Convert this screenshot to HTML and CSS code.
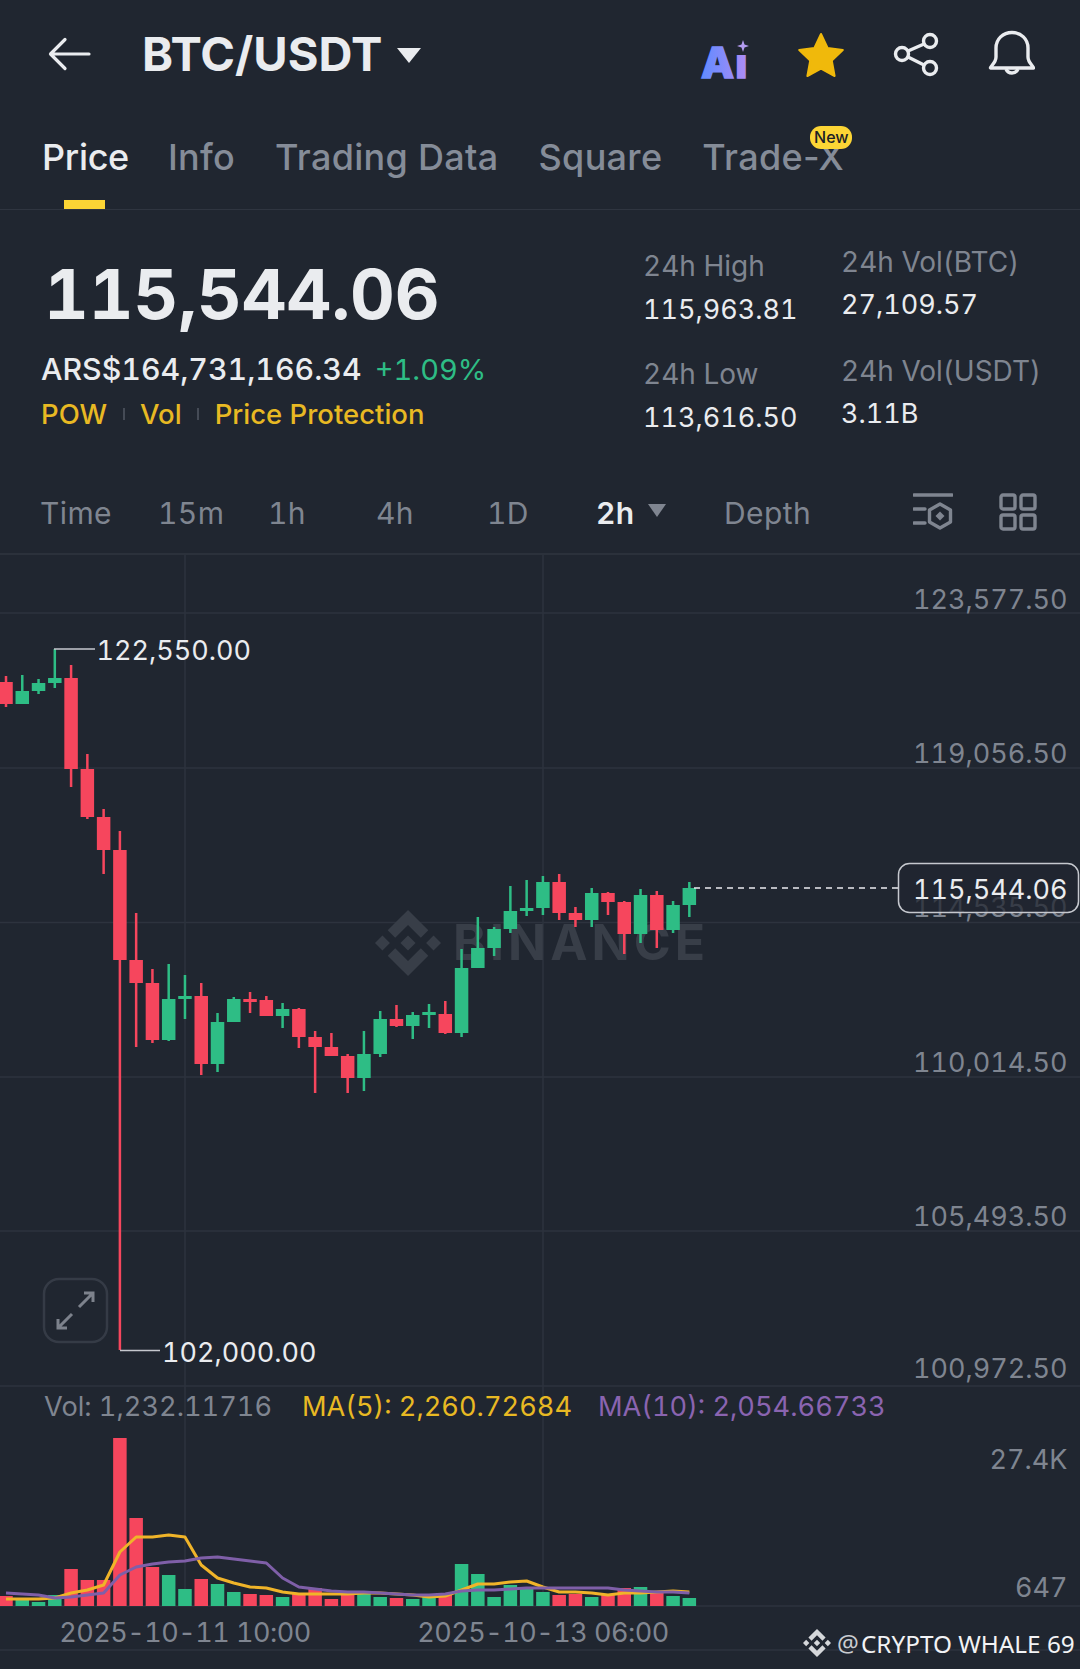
FILE: index.html

```html
<!DOCTYPE html>
<html lang="en">
<head>
  <meta charset="UTF-8" />
  <meta name="viewport" content="width=device-width, initial-scale=1.0" />
  <title>BTC/USDT</title>
  <link rel="stylesheet" href="styles.css">
</head>
<body>
  <header class="topbar">
    <svg class="back" width="44" height="36" viewBox="0 0 44 36"><path d="M41 18H3M17 3.500 2.500 18 17 32.500"/></svg>
    <h1>BTC/USDT</h1>
    <span class="caret"></span>
    <div class="top-icons">
      <svg class="ai" width="50" height="48" viewBox="0 0 50 48">
        <defs>
          <linearGradient id="aiGrad" x1="0" y1="0" x2="1" y2="0">
            <stop offset="0" stop-color="#5f8bff"/>
            <stop offset="1" stop-color="#b08cf5"/>
          </linearGradient>
        </defs>
        <text x="1" y="47.500" fill="url(#aiGrad)" stroke="url(#aiGrad)">Ai</text>
        <rect class="ai-mask" x="34" y="8" width="16" height="17"/>
        <path d="M43 10l1.500 4.500 4.500 1.500-4.500 1.500L43 22l-1.500-4.500-4.500-1.500 4.500-1.500z" fill="#b39cf0"/>
      </svg>
      <svg class="star" width="48" height="48" viewBox="0 0 48 48"><path d="M24 4l6.600 14 15.200 2-11 10.600 2.800 15.400L24 38.600 10.400 46l2.800-15.400-11-10.600 15.200-2z"/></svg>
      <svg class="line-icon" width="48" height="48" viewBox="0 0 48 48">
        <circle cx="10" cy="24" r="6.500"/><circle cx="38" cy="11" r="6.500"/><circle cx="38" cy="38" r="6.500"/>
        <path d="M16 21l16-7M16 27l16 8"/>
      </svg>
      <svg class="line-icon" width="48" height="48" viewBox="0 0 48 48">
        <path d="M3.500 38c-.5-1.500 5.500-5 5.500-11v-9C9 9 16 2.500 25 2.500S41 9 41 18v9c0 6 6 9.500 5.500 11z"/>
        <path d="M19 39a6.500 6.500 0 0 0 12 0"/>
      </svg>
    </div>
  </header>

  <nav class="tabs">
    <a class="tab active">Price</a>
    <a class="tab">Info</a>
    <a class="tab">Trading Data</a>
    <a class="tab">Square</a>
    <a class="tab">Trade-X<span class="badge">New</span></a>
  </nav>

  <section class="summary">
    <div class="quote">
      <div class="last-price">115,544.06</div>
      <div class="fiat">ARS$164,731,166.34 <span class="up">+1.09%</span></div>
      <div class="tags">
        <span>POW</span><i></i><span>Vol</span><i></i><span>Price Protection</span>
      </div>
    </div>
    <div class="stats stats-a">
      <div class="stat"><label>24h High</label><b>115,963.81</b></div>
      <div class="stat"><label>24h Low</label><b>113,616.50</b></div>
    </div>
    <div class="stats stats-b">
      <div class="stat"><label>24h Vol(BTC)</label><b>27,109.57</b></div>
      <div class="stat"><label>24h Vol(USDT)</label><b>3.11B</b></div>
    </div>
  </section>

  <div class="intervals">
    <span>Time</span>
    <span>15m</span>
    <span>1h</span>
    <span>4h</span>
    <span>1D</span>
    <span class="current">2h<em></em></span>
    <span>Depth</span>
    <svg class="tool" width="40" height="38" viewBox="0 0 40 38">
      <path d="M1 2h38M1 16h11M1 30h11"/>
      <path d="M27 11l10.500 6v12L27 35l-10.500-6V17z"/>
      <path class="dot" d="M27 18.500l4.500 4.500-4.500 4.500-4.500-4.500z"/>
    </svg>
    <svg class="tool" width="38" height="38" viewBox="0 0 38 38">
      <rect x="2" y="2" width="14" height="14" rx="2"/><rect x="22" y="2" width="14" height="14" rx="2"/>
      <rect x="2" y="22" width="14" height="14" rx="2"/><rect x="22" y="22" width="14" height="14" rx="2"/>
    </svg>
  </div>

  <svg id="chart" width="1080" height="1114" viewBox="0 555 1080 1114">
    <defs>
      <symbol id="bnb" viewBox="0 0 126.610 126.610">
        <path d="M38.730 53.200l24.590-24.580 24.600 24.600 14.300-14.310L63.320 0 24.420 38.900zM0 63.310L14.300 49l14.310 14.310-14.310 14.300zM38.730 73.410L63.320 98l24.600-24.600 14.310 14.290-38.900 38.920-38.910-38.880-.02-.02zM98 63.310L112.300 49l14.310 14.310-14.310 14.300zM77.830 63.300L63.320 48.780 48.810 63.280l14.510 14.500z"/>
      </symbol>
    </defs>

    <g class="grid">
      <path d="M0 613H1080M0 768H1080M0 922.500H1080M0 1077H1080M0 1231H1080M0 1386H1080M0 1606H1080M0 1650H1080"/>
      <path d="M185 555V1606M543 555V1606"/>
    </g>

    <use href="#bnb" class="mark" x="375" y="910" width="66" height="66"/>
    <text class="mark mark-text" x="453" y="960">BINANCE</text>

    <g class="axis">
      <text x="1067.500" y="609">123,577.50</text>
      <text x="1067.500" y="763">119,056.50</text>
      <text x="1067.500" y="917">114,535.50</text>
      <text x="1067.500" y="1072">110,014.50</text>
      <text x="1067.500" y="1226">105,493.50</text>
      <text x="1067.500" y="1378">100,972.50</text>
      <text x="1067.500" y="1469">27.4K</text>
      <text x="1067.500" y="1597">647</text>
    </g>

    <g id="candles"></g>
    <g id="volumes"></g>
    <polyline id="ma5" class="ma ma5"/>
    <polyline id="ma10" class="ma ma10"/>

    <path class="pointer" d="M54 649H95M120 1350.500H160"/>
    <text class="peak" x="96.500" y="660">122,550.00</text>
    <text class="peak" x="162" y="1362">102,000.00</text>

    <path class="last-line" d="M694 888H898"/>
    <rect class="last-box" x="898.500" y="863.500" width="180" height="49" rx="11"/>
    <text class="last-text" x="1067.500" y="899">115,544.06</text>

    <g class="expand">
      <rect x="44" y="1279" width="63" height="63" rx="15"/>
      <path d="M79 1307l14-14M84 1293h9v9M72 1314l-14 14M58 1319v9h9"/>
    </g>

    <text class="legend" x="44" y="1416">Vol: 1,232.11716</text>
    <text class="legend l-ma5" x="302" y="1416">MA(5): 2,260.72684</text>
    <text class="legend l-ma10" x="598" y="1416">MA(10): 2,054.66733</text>

    <text class="time" x="185" y="1642">2025-10-11 10:00</text>
    <text class="time" x="543" y="1642">2025-10-13 06:00</text>

    <use href="#bnb" class="credit-logo" x="803" y="1629" width="28" height="28"/>
    <text class="credit at" x="837" y="1652">@</text>
    <text class="credit" x="861" y="1653">CRYPTO WHALE 69</text>
  </svg>

  <script src="chart.js"></script>
</body>
</html>
```

FILE: styles.css

```css
* {
  box-sizing: border-box;
}
body {
  width: 1080px;
  height: 1669px;
  margin: 0;
  overflow: hidden;
  background-color: #202630;
  color: #eaecef;
  font-family: Inter, "Liberation Sans", sans-serif;
  font-variant-numeric: tabular-nums;
}
.topbar {
  display: flex;
  align-items: center;
  height: 108px;
  padding: 0 45px 0 48px;
}
.back {
  margin-right: 50px;
}
.back path {
  fill: none;
  stroke: #eaecef;
  stroke-width: 3.2;
  stroke-linecap: round;
  stroke-linejoin: round;
}
h1 {
  margin: -2px 0 0;
  font-size: 47px;
  font-weight: 700;
}
.caret {
  width: 0;
  height: 0;
  margin: 3px 0 0 15px;
  border-left: 12px solid transparent;
  border-right: 12px solid transparent;
  border-top: 15px solid #eaecef;
}
.top-icons {
  display: flex;
  gap: 47px;
  margin-left: auto;
}
.ai {
  overflow: visible;
}
.ai text {
  font-size: 43px;
  font-weight: 800;
  letter-spacing: 1px;
  stroke-width: 1.5;
}
.ai-mask {
  fill: #202630;
}
.star path {
  fill: #f0b90b;
  stroke: #f0b90b;
  stroke-width: 2;
  stroke-linejoin: round;
}
.line-icon * {
  fill: none;
  stroke: #eaecef;
  stroke-width: 3.4;
  stroke-linejoin: round;
}

.tabs {
  display: flex;
  gap: 40px;
  height: 102px;
  padding: 28px 0 0 42px;
  border-bottom: 1px solid #2f3540;
  font-variant-numeric: normal;
}
.tab {
  position: relative;
  height: 42px;
  font-size: 36px;
  font-weight: 500;
  letter-spacing: 0.3px;
  line-height: 42px;
  color: #858c98;
}
.tab.active {
  margin-right: -1px;
  color: #eaecef;
  letter-spacing: -0.3px;
}
.tab.active::after {
  content: "";
  position: absolute;
  left: 22px;
  top: 64px;
  width: 41px;
  height: 9px;
  background-color: #fcd535;
}
.badge {
  position: absolute;
  left: 108px;
  top: -10px;
  width: 42px;
  height: 23px;
  border-radius: 11px;
  background-color: #fcd535;
  color: #1c1f26;
  font-size: 16px;
  letter-spacing: 0;
  line-height: 23px;
  text-align: center;
}

.summary {
  display: flex;
  height: 260px;
}
.quote {
  width: 602px;
  padding: 48px 0 0 41px;
}
.last-price {
  margin-left: 3px;
  font-size: 69.300px;
  font-weight: 700;
  line-height: 72px;
}
.fiat {
  margin-top: 21px;
  font-size: 30.300px;
  font-weight: 500;
  line-height: 36px;
}
.up {
  margin-left: 5px;
  color: #2ebd85;
  font-size: 29px;
  font-weight: 400;
}
.tags {
  display: flex;
  align-items: center;
  margin-top: 9px;
  font-size: 27.500px;
  font-weight: 500;
  line-height: 34px;
  color: #e8b923;
}
.tags i {
  width: 2px;
  height: 12px;
  margin: 0 15.500px;
  background-color: #454b56;
}
.stats {
  display: flex;
  flex-direction: column;
}
.stats label,
.stats b {
  display: block;
  font-size: 28px;
  font-weight: 400;
  line-height: 32px;
  white-space: nowrap;
}
.stats label {
  color: #7f8590;
}
.stats b {
  color: #eaecef;
  font-size: 27px;
}
.stats-a {
  width: 239px;
  padding: 40px 0 0 41px;
  gap: 32px;
}
.stats-a b {
  margin-top: 12px;
}
.stats-b {
  gap: 34px;
  padding-top: 36px;
}
.stats-b b {
  margin-top: 11px;
}

.intervals {
  display: grid;
  grid-template-columns: 118px 110px 108px 111px 109px 128px 189px 86px auto;
  align-items: center;
  height: 85px;
  padding-left: 40px;
  border-bottom: 2px solid #2b313b;
  font-size: 30px;
  letter-spacing: 0.4px;
  color: #7f8590;
}
.intervals span {
  padding-top: 2px;
}
.current {
  display: flex;
  align-items: center;
  color: #eaecef;
  font-weight: 600;
}
.current em {
  width: 0;
  height: 0;
  margin: -4px 0 0 13px;
  border-left: 9.500px solid transparent;
  border-right: 9.500px solid transparent;
  border-top: 13px solid #7f8590;
}
.tool * {
  fill: none;
  stroke: #7f8590;
  stroke-width: 3.4;
  stroke-linecap: round;
  stroke-linejoin: round;
}
.tool .dot {
  fill: #7f8590;
  stroke: none;
}

#chart {
  display: block;
}
.grid path {
  fill: none;
  stroke: #2d333e;
  stroke-width: 1.5;
}
.mark {
  fill: #383e48;
}
.mark-text {
  font-size: 50px;
  font-weight: 700;
  letter-spacing: 4px;
}
.axis text {
  font-size: 27px;
  fill: #7f8590;
  text-anchor: end;
}
.up-c {
  fill: #2ebd85;
}
.down-c {
  fill: #f6465d;
}
.ma {
  fill: none;
  stroke-width: 3;
  stroke-linejoin: round;
}
.ma5 {
  stroke: #f0b429;
}
.ma10 {
  stroke: #7f5fa8;
}
.pointer {
  fill: none;
  stroke: #c5c8ce;
  stroke-width: 1.5;
}
.peak {
  font-size: 27px;
  fill: #eaecef;
}
.last-line {
  stroke: #eaecef;
  stroke-width: 1.5;
  stroke-dasharray: 6 5;
}
.last-box {
  fill: rgba(32, 38, 48, 0.75);
  stroke: #c5c8ce;
  stroke-width: 1.5;
}
.last-text {
  font-size: 27px;
  fill: #eaecef;
  text-anchor: end;
}
.expand rect {
  fill: none;
  stroke: #353b46;
  stroke-width: 2.5;
}
.expand path {
  fill: none;
  stroke: #7d828c;
  stroke-width: 3;
}
.legend {
  font-size: 27.200px;
  fill: #7f8590;
}
.l-ma5 {
  fill: #e8b923;
}
.l-ma10 {
  fill: #8a64b0;
}
.time {
  font-size: 27px;
  letter-spacing: -0.5px;
  fill: #7f8590;
  text-anchor: middle;
}
.credit-logo {
  fill: #d5d7da;
}
.credit {
  font-family: "Noto Sans", sans-serif;
  font-size: 24.300px;
  fill: #f2f3f5;
}
.at {
  fill: #c9ccd1;
}
```

FILE: chart.js

```js
// [up, wick top, body top, body bottom, wick bottom]
const candles = [
  [0, 676, 682, 704, 707], [1, 675, 691, 704, 704], [1, 679, 683, 691, 694], [1, 649, 678, 683, 688],
  [0, 665, 678, 769, 787], [0, 754, 769, 817, 819], [0, 809, 817, 850, 874], [0, 831, 850, 960, 1350],
  [0, 913, 960, 983, 1047], [0, 969, 983, 1040, 1043], [1, 964, 999, 1040, 1041], [1, 975, 996, 999, 1019],
  [0, 983, 996, 1064, 1075], [1, 1013, 1022, 1064, 1072], [1, 997, 999, 1022, 1022], [0, 992, 999, 1002, 1013],
  [0, 996, 1000, 1016, 1016], [1, 1003, 1009, 1016, 1028], [0, 1008, 1009, 1037, 1048], [0, 1031, 1037, 1047, 1093],
  [0, 1033, 1047, 1056, 1056], [0, 1054, 1056, 1078, 1093], [1, 1031, 1054, 1078, 1091], [1, 1011, 1019, 1054, 1057],
  [0, 1005, 1019, 1026, 1027], [1, 1012, 1015, 1026, 1039], [1, 1004, 1012, 1015, 1028], [0, 1001, 1014, 1033, 1034],
  [1, 949, 968, 1033, 1037], [1, 917, 948, 968, 968], [1, 927, 929, 948, 956], [1, 886, 911, 929, 933],
  [1, 880, 908, 911, 916], [1, 876, 882, 908, 915], [0, 874, 882, 913, 920], [0, 907, 913, 920, 927],
  [1, 888, 893, 920, 927], [0, 892, 893, 902, 915], [0, 901, 902, 934, 954], [1, 889, 895, 934, 943],
  [0, 891, 895, 930, 948], [1, 901, 905, 930, 933], [1, 882, 888, 905, 917]
];

const volumes = [
  1596, 1600, 1602, 1595, 1569, 1580, 1580, 1438, 1518, 1567, 1575, 1589, 1579, 1584, 1592,
  1594, 1595, 1597, 1594, 1588, 1599, 1593, 1594, 1597, 1598, 1599, 1597, 1593, 1564, 1574,
  1597, 1585, 1588, 1592, 1595, 1594, 1597, 1595, 1588, 1587, 1592, 1596, 1598
];

const ma5 = [
  1599, 1599, 1599, 1598, 1593, 1590, 1585, 1552, 1537, 1537, 1535, 1537, 1565, 1578, 1583,
  1587, 1588, 1592, 1594, 1594, 1594, 1594, 1593, 1593, 1594, 1595, 1597, 1596, 1590, 1584,
  1584, 1582, 1581, 1587, 1592, 1592, 1593, 1595, 1593, 1593, 1592, 1591, 1592
];

const ma10 = [
  1593, 1594, 1595, 1598, 1597, 1595, 1593, 1575, 1567, 1564, 1562, 1561, 1558, 1557, 1559,
  1561, 1563, 1578, 1587, 1589, 1591, 1592, 1592, 1593, 1594, 1595, 1595, 1594, 1591, 1590,
  1590, 1589, 1588, 1588, 1588, 1588, 1588, 1588, 1590, 1591, 1592, 1592, 1593
];

const NS = "http://www.w3.org/2000/svg";
const STEP = 16.27;
const BODY = 13.5;
const xAt = i => 6 + i * STEP;

function rect(parent, x, y, w, h, cls) {
  const r = document.createElementNS(NS, "rect");
  r.setAttribute("x", x);
  r.setAttribute("y", y);
  r.setAttribute("width", w);
  r.setAttribute("height", h);
  r.setAttribute("class", cls);
  parent.appendChild(r);
}

const candleGroup = document.getElementById("candles");
candles.forEach((c, i) => {
  const cls = c[0] ? "up-c" : "down-c";
  rect(candleGroup, xAt(i) - 1.25, c[1], 2.5, c[4] - c[1], cls);
  rect(candleGroup, xAt(i) - BODY / 2, c[2], BODY, c[3] - c[2], cls);
});

const volumeGroup = document.getElementById("volumes");
volumes.forEach((top, i) => {
  rect(volumeGroup, xAt(i) - BODY / 2, top, BODY, 1606 - top, candles[i][0] ? "up-c" : "down-c");
});

function line(id, values) {
  document.getElementById(id).setAttribute("points", values.map((y, i) => xAt(i) + "," + y).join(" "));
}
line("ma5", ma5);
line("ma10", ma10);
```
